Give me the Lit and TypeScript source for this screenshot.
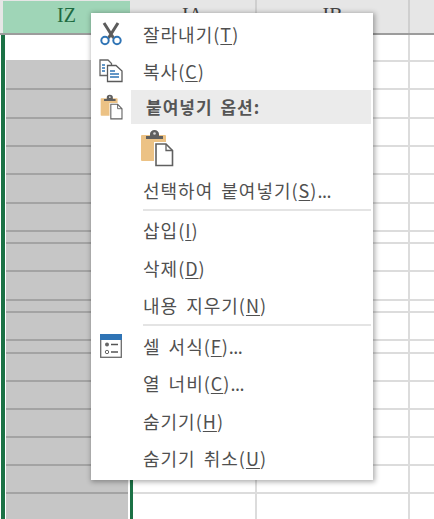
import { LitElement, html, css, svg } from "lit";
import { customElement } from "lit/decorators.js";

const rowHeights = [27, 28, 29, 28, 28, 29, 28, 12, 28, 29, 12, 28, 13, 28, 28, 28, 28, 28, 30];

const clip = (w: number, h: number) => svg`<svg width="${w}" height="${h}" viewBox="0 0 34 38" class="ic">
  <path d="M1 7 a1 1 0 0 1 1 -1 H25 a1 1 0 0 1 1 1 V32 H2 a1 1 0 0 1 -1 -1 Z" fill="#ecc285"/>
  <path d="M6 10 V7 H10 V5 A4.500 4 0 0 1 19 5 V7 H23 V10 Z" fill="#5f5f5f"/>
  <circle cx="14.500" cy="4.500" r="1.300" fill="#d8d8d8"/>
  <path d="M14 13 H27 L35 21 V38 H14 Z" fill="#fff"/>
  <path d="M16 15 H26 L32.500 21.500 V36.500 H16 Z" fill="#fff" stroke="#606060" stroke-width="1.600"/>
  <path d="M26 15 V21.500 H32.500" fill="none" stroke="#606060" stroke-width="1.300"/>
</svg>`;

const scissors = svg`<svg width="22" height="24" viewBox="0 0 22 24" class="ic">
  <path d="M4 1 L13.500 16 M18 1 L8.500 16" stroke="#5c5c5c" stroke-width="3" fill="none"/>
  <circle cx="5" cy="18.500" r="3.700" fill="#fff" stroke="#2f74b5" stroke-width="2"/>
  <circle cx="17" cy="18.500" r="3.700" fill="#fff" stroke="#2f74b5" stroke-width="2"/>
</svg>`;

const copy = svg`<svg width="24" height="24" viewBox="0 0 24 24" class="ic">
  <path d="M8 16.500 H1 V1 H9 L12.500 4.500 V6" fill="#fff" stroke="#666" stroke-width="1.300"/>
  <path d="M3 6 H6 M3 9 H6 M3 12 H6" stroke="#2f74b5" stroke-width="1.500"/>
  <path d="M8.500 6.500 H17 L23 12 V22.500 H8.500 Z" fill="#fff" stroke="#5a5a5a" stroke-width="1.300"/>
  <path d="M11 12 H16 M11 15 H20 M11 18 H20" stroke="#2f74b5" stroke-width="1.500"/>
</svg>`;

const format = svg`<svg width="22" height="24" viewBox="0 0 22 24" class="ic">
  <rect x=".7" y="1" width="20.600" height="22.300" fill="#fff" stroke="#6a6a6a" stroke-width="1.300"/>
  <rect x="0" y="0" width="22" height="6" fill="#2f74b5"/>
  <circle cx="7" cy="10.500" r="2" fill="#666"/>
  <circle cx="7" cy="18" r="1.700" fill="#fff" stroke="#666" stroke-width="1"/>
  <path d="M11 10.500 H18 M11 18 H18" stroke="#555" stroke-width="1.500"/>
</svg>`;

@customElement("app-root")
export class AppRoot extends LitElement {
  static styles = css`
    :host {
      display: block;
      position: relative;
      width: 434px;
      height: 519px;
      overflow: hidden;
      background: #fff;
      font-family: "Noto Sans CJK KR", "Noto Sans", sans-serif;
    }
    .head {
      display: flex;
      height: 35px;
      background: #e6e6e6;
      border-bottom: 2px solid #9c9c9c;
      box-sizing: border-box;
      font-family: "Liberation Serif", serif;
      font-size: 20px;
      color: #444;
    }
    .h0 { width: 3px; }
    .h1 {
      width: 127px;
      margin-top: 1px;
      background: #9fd5b7;
      color: #1e6b41;
      display: flex;
      justify-content: center;
      padding-top: 3px;
      box-sizing: border-box;
    }
    .h2, .h3 {
      display: flex;
      justify-content: center;
      padding-top: 4px;
      box-sizing: border-box;
      border-right: 2px solid #cfcfcf;
    }
    .h2 { width: 127px; }
    .h3 { width: 153px; }
    .row { display: flex; box-sizing: border-box; }
    .gut { width: 1px; flex: none; }
    .sel {
      width: 132px;
      flex: none;
      box-sizing: border-box;
      border-left: 4px solid #1b7145;
      border-right: 3px solid #1b7145;
      padding: 0 2px 0 1px;
      display: flex;
    }
    .fill { flex: 1; box-sizing: border-box; border-bottom: 2px solid #a3a3a3; background: #c6c6c6; }
    .fill.first { background: #fff; border-bottom-color: #c6c6c6; }
    .c { flex: none; box-sizing: border-box; border-bottom: 2px solid #dcdcdc; border-right: 2px solid #dcdcdc; }
    .c2 { width: 124px; }
    .c3 { width: 153px; }
    .c4 { flex: 1; border-right: 0; }

    .menu {
      position: absolute;
      left: 91px;
      top: 13px;
      width: 282px;
      height: 467px;
      box-sizing: border-box;
      padding: 2px 2px 2px 0;
      background: #fff;
      box-shadow: 1px 1px 5px 1px rgba(0, 0, 0, 0.32);
      color: #505050;
      font-size: 18px;
      letter-spacing: 1px;
      word-spacing: 3px;
      display: flex;
      flex-direction: column;
    }
    .item { display: flex; height: 37.500px; align-items: center; flex: none; }
    .icon { width: 40px; flex: none; display: flex; justify-content: center; align-items: center; }
    .ic { display: block; }
    .txt { padding-left: 12px; white-space: nowrap; }
    .tail { letter-spacing: -0.500px; }
    u { text-underline-offset: 2px; }
    .opt { height: 34px; }
    .opt .txt {
      flex: 1;
      background: #ebebeb;
      height: 34px;
      line-height: 33px;
      font-weight: 700;
      font-size: 17px;
      padding-left: 15px;
      color: #555;
    }
    .pic { height: 47px; padding: 5px 0 0 49px; box-sizing: border-box; flex: none; }
    .sep { height: 2px; margin: 0 0 1px 52px; background: #e4e4e4; flex: none; }
  `;

  private entry(label: string, key: string, tail = "", icon: unknown = null) {
    return html`<div class="item">
      <div class="icon">${icon}</div>
      <div class="txt">${label}(<u>${key}</u>)<span class="tail">${tail}</span></div>
    </div>`;
  }

  render() {
    return html`
      <div class="head">
        <div class="h0"></div>
        <div class="h1">IZ</div>
        <div class="h2">IA</div>
        <div class="h3">IB</div>
      </div>
      ${rowHeights.map(
        (h, i) => html`<div class="row" style="height:${h}px">
          <div class="gut"></div>
          <div class="sel"><div class="fill ${i === 0 ? "first" : ""}"></div></div>
          <div class="c c2"></div>
          <div class="c c3"></div>
          <div class="c c4"></div>
        </div>`
      )}
      <div class="menu">
        ${this.entry("잘라내기", "T", "", scissors)}
        ${this.entry("복사", "C", "", copy)}
        <div class="item opt">
          <div class="icon">${clip(23, 26)}</div>
          <div class="txt">붙여넣기 옵션:</div>
        </div>
        <div class="pic">${clip(34, 38)}</div>
        ${this.entry("선택하여 붙여넣기", "S", "...")}
        <div class="sep"></div>
        ${this.entry("삽입", "I")}
        ${this.entry("삭제", "D")}
        ${this.entry("내용 지우기", "N")}
        <div class="sep"></div>
        ${this.entry("셀 서식", "F", "...", format)}
        ${this.entry("열 너비", "C", "...")}
        ${this.entry("숨기기", "H")}
        ${this.entry("숨기기 취소", "U")}
      </div>
    `;
  }
}
